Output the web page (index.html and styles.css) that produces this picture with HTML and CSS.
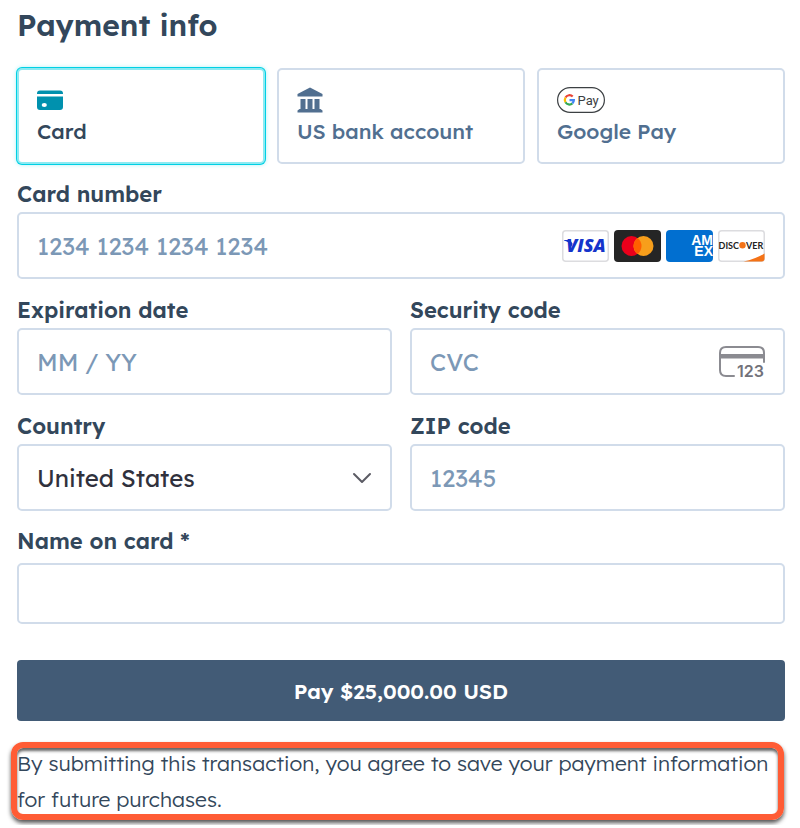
FILE: index.html
```html
<!DOCTYPE html>
<html lang="en">
<head>
<meta charset="utf-8">
<meta name="viewport" content="width=device-width, initial-scale=1">
<title>Payment info</title>
<link rel="stylesheet" href="styles.css">
</head>
<body>
<form class="payment">
  <h1 class="title">Payment info</h1>

  <div class="methods">
    <button type="button" class="method method-active" aria-pressed="true">
      <svg class="method-icon" width="26" height="26" viewBox="0 0 26 26" aria-hidden="true">
        <path fill="#0091ae" d="M0 6.500q0-3 3-3h20q3 0 3 3v.5H0zM0 9.500h26V20q0 3-3 3H3q-3 0-3-3z"/>
        <ellipse cx="7.300" cy="18" rx="2.600" ry="2" fill="#fff"/>
      </svg>
      <span>Card</span>
    </button>
    <button type="button" class="method" aria-pressed="false">
      <svg class="method-icon" width="26" height="26" viewBox="0 0 26 26" aria-hidden="true">
        <path fill="#516f90" d="M13 .5 25.500 7v2.500H.5V7zM3.500 12h5v10h-5zM10.500 12h5v10h-5zM17.500 12h5v10h-5zM2.500 22h21l2 1.500V25.500H.5v-2z"/>
      </svg>
      <span>US bank account</span>
    </button>
    <button type="button" class="method" aria-pressed="false">
      <svg class="method-icon" width="48" height="26" viewBox="0 0 48 26" aria-hidden="true">
        <rect x=".6" y=".6" width="46.800" height="24.800" rx="12.400" fill="#fff" stroke="#3c4043" stroke-width="1.200"/>
        <g fill="none" stroke-width="2.200">
          <path stroke="#ea4335" d="M8.500 10.600A4.500 4.500 0 0 1 15.700 9.600"/>
          <path stroke="#fbbc04" d="M8.500 10.600a4.500 4.500 0 0 0 0 4.600"/>
          <path stroke="#34a853" d="M8.500 15.200a4.500 4.500 0 0 0 6.900 1.200"/>
          <path stroke="#4285f4" d="M15.400 16.400a4.500 4.500 0 0 0 1.500-3.300H12.500"/>
        </g>
        <text x="20.500" y="18" class="gpay-text">Pay</text>
      </svg>
      <span>Google Pay</span>
    </button>
  </div>

  <div class="field">
    <label for="number">Card number</label>
    <div class="control">
      <input id="number" type="text" inputmode="numeric" placeholder="1234 1234 1234 1234">
      <div class="brands" aria-hidden="true">
        <svg width="47" height="32" viewBox="0 0 47 32">
          <rect x=".75" y=".75" width="45.500" height="30.500" rx="3" fill="#fff" stroke="#dcdcdf" stroke-width="1.500"/>
          <text x="24" y="22" text-anchor="middle" class="visa-text">VISA</text>
          <path fill="#1434cb" d="M2 10h6l2.500 3.500-.5 3.500C8.500 13.500 6 11.500 2 10.500z"/>
        </svg>
        <svg width="47" height="32" viewBox="0 0 47 32">
          <rect width="47" height="32" rx="4" fill="#252525"/>
          <circle cx="17.500" cy="16" r="10" fill="#eb001b"/>
          <circle cx="29.500" cy="16" r="10" fill="#f79e1b"/>
          <path fill="#ff5f00" d="M23.500 8a10 10 0 0 1 0 16 10 10 0 0 1 0-16z"/>
        </svg>
        <svg width="47" height="32" viewBox="0 0 47 32">
          <rect width="47" height="32" rx="4" fill="#016fd0"/>
          <text text-anchor="end" class="amex-text"><tspan x="47" y="15">AM</tspan><tspan x="47" y="26">EX</tspan></text>
        </svg>
        <svg width="47" height="32" viewBox="0 0 47 32">
          <rect x=".75" y=".75" width="45.500" height="30.500" rx="3" fill="#fff" stroke="#dcdcdf" stroke-width="1.500"/>
          <path fill="#f47216" d="M46.500 23.500V28.500q0 3-3 3H25.500q12-2.500 21-8z"/>
          <text x="21" y="18.500" text-anchor="end" class="discover-text">DISC</text>
          <circle cx="24.500" cy="15.300" r="3.200" fill="#f47216"/>
          <text x="28" y="18.500" class="discover-text">VER</text>
        </svg>
      </div>
    </div>
  </div>

  <div class="row">
    <div class="field">
      <label for="expiry">Expiration date</label>
      <div class="control"><input id="expiry" type="text" placeholder="MM / YY"></div>
    </div>
    <div class="field">
      <label for="cvc">Security code</label>
      <div class="control">
        <input id="cvc" type="text" inputmode="numeric" placeholder="CVC">
        <svg class="cvc-icon" width="46" height="38" viewBox="0 -2 46 38" aria-hidden="true">
          <path fill="none" stroke="#8b8b91" stroke-width="2" stroke-linecap="round" d="M15 31H7q-6 0-6-6V8q0-6 6-6h32q6 0 6 6v9"/>
          <path fill="#8b8b91" d="M1 9h44v4.500H1z"/>
          <text x="45" y="32" text-anchor="end" class="cvc-text">123</text>
        </svg>
      </div>
    </div>
  </div>

  <div class="row">
    <div class="field">
      <label for="country">Country</label>
      <div class="control">
        <select id="country"><option>United States</option></select>
        <svg class="chevron" width="20" height="12" viewBox="0 0 20 12" aria-hidden="true">
          <path fill="none" stroke="#5b5b64" stroke-width="2" stroke-linecap="round" stroke-linejoin="round" d="M2 2l8 8 8-8"/>
        </svg>
      </div>
    </div>
    <div class="field">
      <label for="zip">ZIP code</label>
      <div class="control"><input id="zip" type="text" inputmode="numeric" placeholder="12345"></div>
    </div>
  </div>

  <div class="field field-name">
    <label for="name">Name on card *</label>
    <div class="control"><input id="name" type="text"></div>
  </div>

  <button type="submit" class="pay">Pay $25,000.00 USD</button>

  <p class="notice">By submitting this transaction, you agree to save your payment information for future purchases.</p>
</form>
</body>
</html>
```
FILE: styles.css
```css
* {
  box-sizing: border-box;
}

body {
  margin: 0;
  background: #fff;
  color: #33475b;
  font-family: Lexend, Inter, sans-serif;
}

button,
input,
select {
  font: inherit;
}

.payment {
  padding: 5px 15px 8px 17px;
}

.title {
  margin: 0 0 23px;
  font-size: 30px;
  font-weight: 600;
  line-height: 40px;
}

.methods {
  display: grid;
  grid-template-columns: repeat(3, 1fr);
  gap: 12px;
  margin-bottom: 16px;
}

.method {
  display: flex;
  flex-direction: column;
  align-items: flex-start;
  gap: 5px;
  padding: 17px 18px;
  border: 2px solid #d1dcea;
  border-radius: 5px;
  background: #fff;
  color: #516f90;
  font-size: 21px;
  font-weight: 500;
  line-height: 27px;
  white-space: nowrap;
}

.method-active {
  border-color: #8ceaf2;
  color: #33475b;
  box-shadow: 0 0 0 1px #00d0e4, 0 0 4px 1px #b5f1f6;
}

.method-icon {
  display: block;
}

.gpay-text {
  fill: #3c4043;
  font: 400 13px Roboto, sans-serif;
}

.field {
  display: flex;
  flex-direction: column;
  gap: 4px;
  min-width: 0;
  margin-bottom: 17px;
}

.field label {
  font-size: 22px;
  font-weight: 600;
  line-height: 28px;
}

.row {
  display: grid;
  grid-template-columns: repeat(2, 1fr);
  gap: 18px;
}

.control {
  position: relative;
  display: flex;
  align-items: center;
  height: 67px;
  padding: 0 18px;
  border: 2px solid #d1dcea;
  border-radius: 5px;
  background: #fff;
}

.control input,
.control select {
  flex: 1;
  min-width: 0;
  height: 100%;
  padding: 0;
  border: 0;
  outline: 0;
  background: transparent;
  color: #30313d;
  font-size: 24px;
}

.control input::placeholder {
  color: #7c98b6;
  opacity: 1;
}

.control select {
  appearance: none;
}

.chevron {
  margin-left: -20px;
  pointer-events: none;
}

.brands {
  display: flex;
  gap: 5px;
}

.visa-text {
  fill: #1434cb;
  font: italic 800 18px "Open Sans", sans-serif;
}

.amex-text {
  fill: #fff;
  font: 700 14px "Liberation Sans", sans-serif;
}

.discover-text {
  fill: #222;
  font: 700 9px Lato, sans-serif;
}

.cvc-text {
  fill: #72727a;
  font: 600 16px Inter, sans-serif;
}

.field-name {
  gap: 8px;
  margin-top: -1px;
  margin-bottom: 36px;
}

.field-name .control {
  height: 61px;
}

.pay {
  display: block;
  width: 100%;
  height: 61px;
  border: 0;
  border-radius: 4px;
  background: #425b76;
  color: #fff;
  font-size: 21px;
  font-weight: 600;
}

.notice {
  position: relative;
  margin: 24px 0 0;
  font-size: 21px;
  font-weight: 350;
  line-height: 36px;
}

/* Highlight frame drawn over the edges of the notice */
.notice::before {
  content: "";
  position: absolute;
  inset: -3px 1px -3px -6px;
  border: 6px solid #ff5c35;
  border-radius: 12px;
  box-shadow: 0 3px 4px #555, inset 0 3px 3px #666;
}
```
